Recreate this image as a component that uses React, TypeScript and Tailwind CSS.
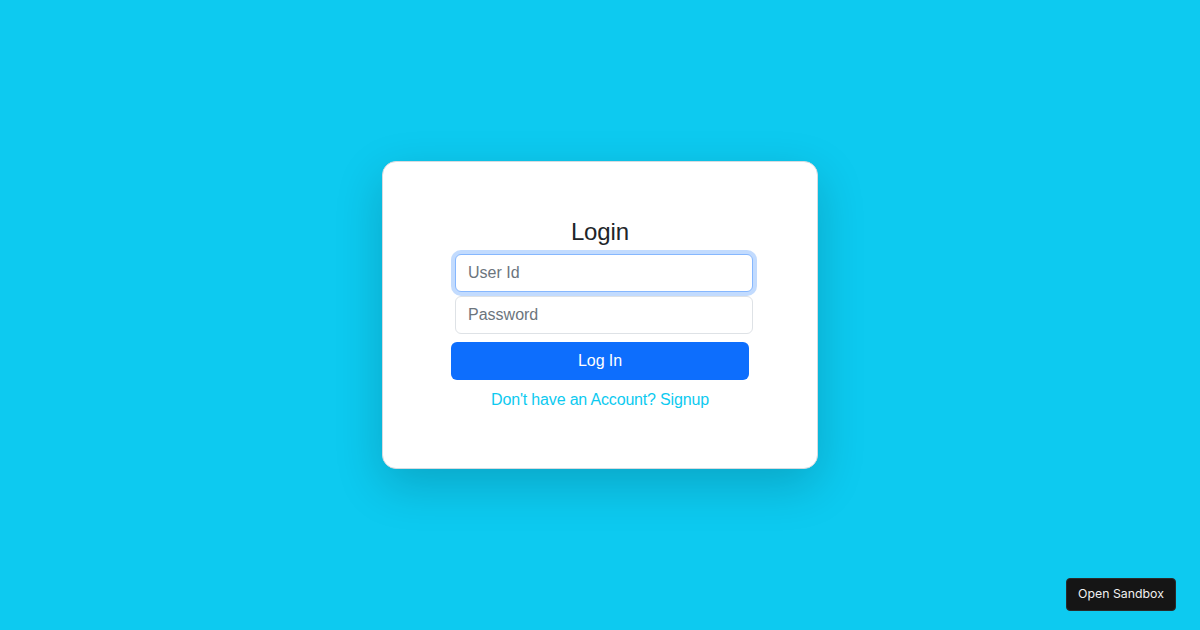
import React from "react";

export default function App(): React.JSX.Element {
  return (
    <div className="relative flex min-h-screen h-[630px] w-full items-center justify-center bg-[#0dcaf0] font-['Liberation_Sans',Arial,sans-serif]">
      <div className="flex h-[308px] w-[436px] flex-col items-center justify-start rounded-[14px] border border-[#d6dbe0] bg-white pt-[55px] shadow-[0_16px_48px_rgba(0,0,0,0.18)]">
        <h1 className="mb-[8px] text-[24px] leading-[29px] tracking-[-0.1px] text-[#212529]">Login</h1>
        <div className="flex w-[298px] flex-col items-start">
          <input
            autoFocus
            type="text"
            placeholder="User Id"
            className="ml-[4px] h-[38px] w-[298px] shrink-0 rounded-[6px] border border-[#86b7fe] bg-white px-[12px] text-[16px] text-[#212529] outline-none ring-4 ring-[rgba(13,110,253,0.25)] placeholder:text-[#6c757d]"
          />
          <input
            type="password"
            placeholder="Password"
            className="ml-[4px] mt-[4px] h-[38px] w-[298px] shrink-0 rounded-[6px] border border-[#dee2e6] bg-white px-[12px] text-[16px] text-[#212529] outline-none placeholder:text-[#6c757d]"
          />
          <button
            type="button"
            className="mt-[8px] h-[38px] w-[298px] rounded-[6px] bg-[#0d6efd] text-[16px] tracking-[-0.1px] text-white"
          >
            Log In
          </button>
        </div>
        <a href="#" className="mt-[8px] text-[16px] leading-[24px] tracking-[-0.17px] text-[#0dcaf0]">
          Don&apos;t have an Account? Signup
        </a>
      </div>
      <button
        type="button"
        className="absolute bottom-[19px] right-[24px] h-[33px] w-[110px] rounded-[4px] border border-[#2a2a2a] bg-[#151515] font-['Inter',sans-serif] text-[12.3px] text-[#f0f0f0]"
      >
        Open Sandbox
      </button>
    </div>
  );
}
